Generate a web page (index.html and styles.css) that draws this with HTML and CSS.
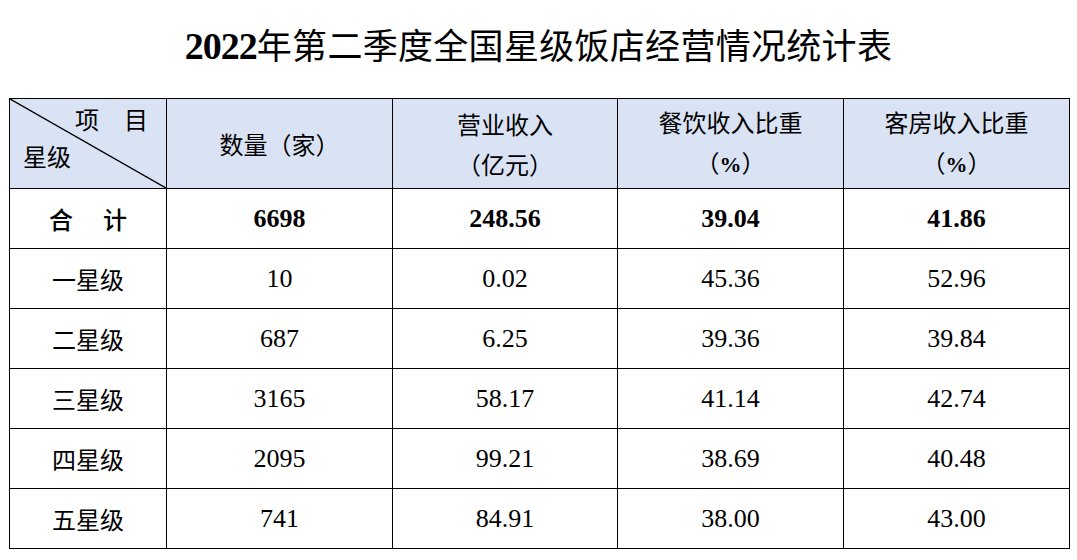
FILE: index.html
```html
<!DOCTYPE html>
<html lang="zh-CN">
<head>
<meta charset="utf-8">
<title>2022年第二季度全国星级饭店经营情况统计表</title>
<link rel="stylesheet" href="styles.css">
</head>
<body>
<h1 class="title"><span class="num">2022</span>年第二季度全国星级饭店经营情况统计表</h1>
<table class="stats">
  <colgroup>
    <col class="c1"><col class="c2"><col class="c3"><col class="c4"><col class="c5">
  </colgroup>
  <thead>
    <tr>
      <th class="corner">
        <svg class="diag" viewBox="0 0 100 100" preserveAspectRatio="none"><line x1="0" y1="0" x2="100" y2="100" stroke="#000" stroke-width="1.4" vector-effect="non-scaling-stroke"/></svg>
        <span class="corner-top">项<span class="sp"></span>目</span>
        <span class="corner-bottom">星级</span>
      </th>
      <th><span class="line">数量（家）</span></th>
      <th><span class="line">营业收入</span><span class="line">（亿元）</span></th>
      <th><span class="line">餐饮收入比重</span><span class="line">（<span class="num">%</span>）</span></th>
      <th><span class="line">客房收入比重</span><span class="line">（<span class="num">%</span>）</span></th>
    </tr>
  </thead>
  <tbody>
    <tr class="total">
      <td class="label">合<span class="sp2"></span>计</td>
      <td class="num">6698</td><td class="num">248.56</td><td class="num">39.04</td><td class="num">41.86</td>
    </tr>
    <tr><td class="label">一星级</td><td class="num">10</td><td class="num">0.02</td><td class="num">45.36</td><td class="num">52.96</td></tr>
    <tr><td class="label">二星级</td><td class="num">687</td><td class="num">6.25</td><td class="num">39.36</td><td class="num">39.84</td></tr>
    <tr><td class="label">三星级</td><td class="num">3165</td><td class="num">58.17</td><td class="num">41.14</td><td class="num">42.74</td></tr>
    <tr><td class="label">四星级</td><td class="num">2095</td><td class="num">99.21</td><td class="num">38.69</td><td class="num">40.48</td></tr>
    <tr><td class="label">五星级</td><td class="num">741</td><td class="num">84.91</td><td class="num">38.00</td><td class="num">43.00</td></tr>
  </tbody>
</table>
</body>
</html>
```

FILE: styles.css
```css
html, body {
  margin: 0;
  padding: 0;
  background: #fff;
  color: #000;
}
body {
  font-family: "Liberation Serif", "Noto Sans CJK SC", serif;
  width: 1077px;
}
.title {
  margin: 0;
  height: 98px;
  line-height: 88px;
  text-align: center;
  font-family: "Noto Sans CJK SC", sans-serif;
  font-size: 35px;
  font-weight: 400;
  letter-spacing: 0.3px;
}
.title .num {
  font-family: "Liberation Serif", serif;
  font-weight: 700;
  font-size: 38px;
  letter-spacing: -1px;
}
.num {
  font-family: "Liberation Serif", serif;
}
.stats {
  margin-left: 9px;
  border-collapse: collapse;
  table-layout: fixed;
  width: 1060px;
}
.c1 { width: 157px; }
.c2 { width: 226px; }
.c3 { width: 225px; }
.c4 { width: 226px; }
.c5 { width: 226px; }
.stats th, .stats td {
  border: 1.5px solid #000;
  padding: 0;
  text-align: center;
  vertical-align: middle;
}
.stats th {
  background: #dae3f3;
  height: 89px;
  font-family: "Noto Sans CJK SC", sans-serif;
  font-weight: 400;
  font-size: 24px;
}
.stats th .line {
  display: block;
  line-height: 40px;
}
.stats th .num {
  font-weight: 700;
  font-size: 22px;
}
.corner {
  position: relative;
}
.diag {
  position: absolute;
  left: 0;
  top: 0;
  width: 100%;
  height: 100%;
}
.corner-top {
  position: absolute;
  left: 65px;
  top: 3px;
  line-height: 34px;
}
.corner-bottom {
  position: absolute;
  left: 13px;
  top: 40px;
  line-height: 34px;
}
.sp {
  display: inline-block;
  width: 25px;
}
.sp2 {
  display: inline-block;
  width: 30px;
}
.stats td {
  height: 59px;
  font-size: 26px;
}
.stats td.label {
  font-family: "Noto Sans CJK SC", sans-serif;
  font-size: 24px;
  font-weight: 400;
}
.stats tr.total td {
  font-weight: 700;
}
.stats tr.total td.label {
  font-weight: 500;
}
```
